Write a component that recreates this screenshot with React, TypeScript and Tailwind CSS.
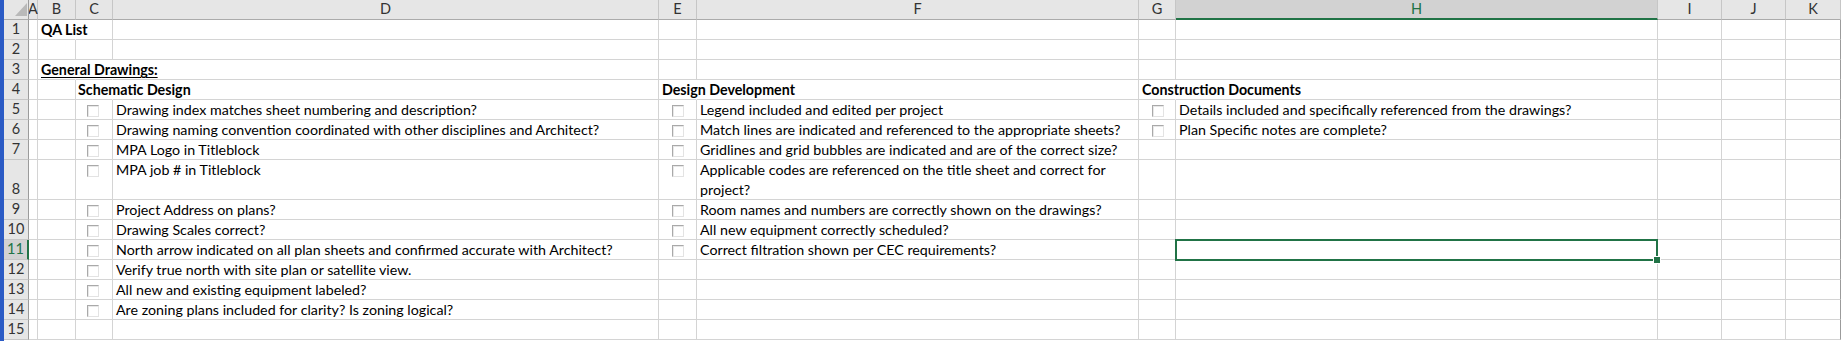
import React from "react";

type ColKey = "A" | "B" | "C" | "D" | "E" | "F" | "G" | "H" | "I" | "J" | "K";

const COLS: { key: ColKey; w: string }[] = [
  { key: "A", w: "w-[9px]" },
  { key: "B", w: "w-[38px]" },
  { key: "C", w: "w-[37px]" },
  { key: "D", w: "w-[546px]" },
  { key: "E", w: "w-[38px]" },
  { key: "F", w: "w-[442px]" },
  { key: "G", w: "w-[37px]" },
  { key: "H", w: "w-[482px]" },
  { key: "I", w: "w-[64px]" },
  { key: "J", w: "w-[64px]" },
  { key: "K", w: "w-[55px]" },
];

const FONT = "font-['Lato','Open_Sans',sans-serif]";

function Checkbox() {
  return (
    <div className="w-[12px] h-[12px] bg-white border border-t-[#a9a9a9] border-l-[#a9a9a9] border-b-[#e3e3e3] border-r-[#e3e3e3] shadow-[inset_1px_1px_0_#e8e8e8]" />
  );
}

type RowDef = {
  n: number;
  tall?: boolean;
  cells: Partial<Record<ColKey, React.ReactNode>>;
  hide?: ColKey[];
  selected?: boolean;
};

const Cb = ({ col }: { col: "C" | "E" | "G" }) => (
  <div className={col === "C" ? "pl-[11px] pt-[5px]" : "pl-[13px] pt-[5px]"}>
    <Checkbox />
  </div>
);

const T = ({ children }: { children: React.ReactNode }) => (
  <div className="pl-[3px] whitespace-nowrap leading-[20px]">{children}</div>
);

const rows: RowDef[] = [
  { n: 1, cells: { B: <T><span className="font-bold">QA List</span></T> }, hide: ["B"] },
  { n: 2, cells: {} },
  {
    n: 3,
    cells: { B: <T><span className="font-bold underline underline-offset-2">General Drawings:</span></T> },
    hide: ["B", "C"],
  },
  {
    n: 4,
    cells: {
      C: <div className="pl-[2px] whitespace-nowrap leading-[20px] font-bold">Schematic Design</div>,
      E: <T><span className="font-bold">Design Development</span></T>,
      G: <T><span className="font-bold">Construction Documents</span></T>,
    },
    hide: ["C", "E", "G"],
  },
  {
    n: 5,
    cells: {
      C: <Cb col="C" />,
      D: <T>Drawing index matches sheet numbering and description?</T>,
      E: <Cb col="E" />,
      F: <T>Legend included and edited per project</T>,
      G: <Cb col="G" />,
      H: <T>Details included and specifically referenced from the drawings?</T>,
    },
  },
  {
    n: 6,
    cells: {
      C: <Cb col="C" />,
      D: <T>Drawing naming convention coordinated with other disciplines and Architect?</T>,
      E: <Cb col="E" />,
      F: <T>Match lines are indicated and referenced to the appropriate sheets?</T>,
      G: <Cb col="G" />,
      H: <T>Plan Specific notes are complete?</T>,
    },
  },
  {
    n: 7,
    cells: {
      C: <Cb col="C" />,
      D: <T>MPA Logo in Titleblock</T>,
      E: <Cb col="E" />,
      F: <T>Gridlines and grid bubbles are indicated and are of the correct size?</T>,
    },
  },
  {
    n: 8,
    tall: true,
    cells: {
      C: <Cb col="C" />,
      D: <T>MPA job # in Titleblock</T>,
      E: <Cb col="E" />,
      F: (
        <T>
          Applicable codes are referenced on the title sheet and correct for
          <br />
          project?
        </T>
      ),
    },
  },
  {
    n: 9,
    cells: {
      C: <Cb col="C" />,
      D: <T>Project Address on plans?</T>,
      E: <Cb col="E" />,
      F: <T>Room names and numbers are correctly shown on the drawings?</T>,
    },
  },
  {
    n: 10,
    cells: {
      C: <Cb col="C" />,
      D: <T>Drawing Scales correct?</T>,
      E: <Cb col="E" />,
      F: <T>All new equipment correctly scheduled?</T>,
    },
  },
  {
    n: 11,
    selected: true,
    cells: {
      C: <Cb col="C" />,
      D: <T>North arrow indicated on all plan sheets and confirmed accurate with Architect?</T>,
      E: <Cb col="E" />,
      F: <T>Correct filtration shown per CEC requirements?</T>,
    },
  },
  {
    n: 12,
    cells: { C: <Cb col="C" />, D: <T>Verify true north with site plan or satellite view.</T> },
  },
  {
    n: 13,
    cells: { C: <Cb col="C" />, D: <T>All new and existing equipment labeled?</T> },
  },
  {
    n: 14,
    cells: { C: <Cb col="C" />, D: <T>Are zoning plans included for clarity? Is zoning logical?</T> },
  },
  { n: 15, cells: {} },
];

function HeaderRow() {
  return (
    <div className="flex h-[20px]">
      <div className="w-[25px] h-full bg-[#e6e6e6] border-r border-r-[#9b9b9b] border-b border-b-[#ababab] relative">
        <svg className="absolute left-[11px] top-[3px]" width="12" height="13" viewBox="0 0 12 13">
          <polygon points="12,0 12,13 0,13" fill="#b9b9b9" />
        </svg>
      </div>
      {COLS.map((c) => {
        const sel = c.key === "H";
        return (
          <div
            key={c.key}
            className={`${c.w} h-full flex items-center justify-center text-[14.5px] ${
              sel
                ? "bg-[#d2d2d2] text-[#217346] border-b-2 border-b-[#217346] border-r border-r-[#c6c6c6]"
                : "bg-[#e6e6e6] text-[#333333] border-b border-b-[#ababab] border-r border-r-[#c6c6c6]"
            } ${c.key === "K" ? "border-r-[#9b9b9b]" : ""}`}
          >
            <span className="leading-none">{c.key}</span>
          </div>
        );
      })}
    </div>
  );
}

function SheetRow({ r }: { r: RowDef }) {
  const h = r.tall ? "h-[40px]" : "h-[20px]";
  return (
    <div className={`flex ${h}`}>
      <div
        className={`w-[25px] h-full flex items-end justify-center pb-[1px] text-[14.5px] leading-[18px] border-b border-b-[#c6c6c6] ${
          r.selected
            ? "bg-[#d2d2d2] text-[#217346] border-r-2 border-r-[#217346]"
            : "bg-[#e6e6e6] text-[#333333] border-r border-r-[#9b9b9b]"
        }`}
      >
        {r.n}
      </div>
      {COLS.map((c) => {
        const hidden = r.hide?.includes(c.key);
        const isSel = r.selected && c.key === "H";
        return (
          <div
            key={c.key}
            className={`${c.w} h-full relative border-b border-b-[#d4d4d4] border-r ${
              hidden ? "border-r-transparent" : c.key === "K" ? "border-r-[#9b9b9b]" : "border-r-[#d4d4d4]"
            }`}
          >
            <div className="absolute left-0 top-0 z-10 text-[14.25px] text-black">{r.cells[c.key]}</div>
            {isSel && (
              <div className="absolute left-[-1px] top-[-1px] right-[-1px] bottom-[-2px] border-2 border-[#217346] z-20">
                <div className="absolute right-[-5px] bottom-[-5px] w-[8px] h-[8px] bg-[#217346] border border-white" />
              </div>
            )}
          </div>
        );
      })}
    </div>
  );
}

export default function App() {
  return (
    <div className={`w-[1842px] h-[341px] bg-white flex overflow-hidden ${FONT}`}>
      <div className="w-[4px] h-full bg-[#2b5bc5]" />
      <div className="flex flex-col">
        <HeaderRow />
        {rows.map((r) => (
          <SheetRow key={r.n} r={r} />
        ))}
      </div>
    </div>
  );
}
